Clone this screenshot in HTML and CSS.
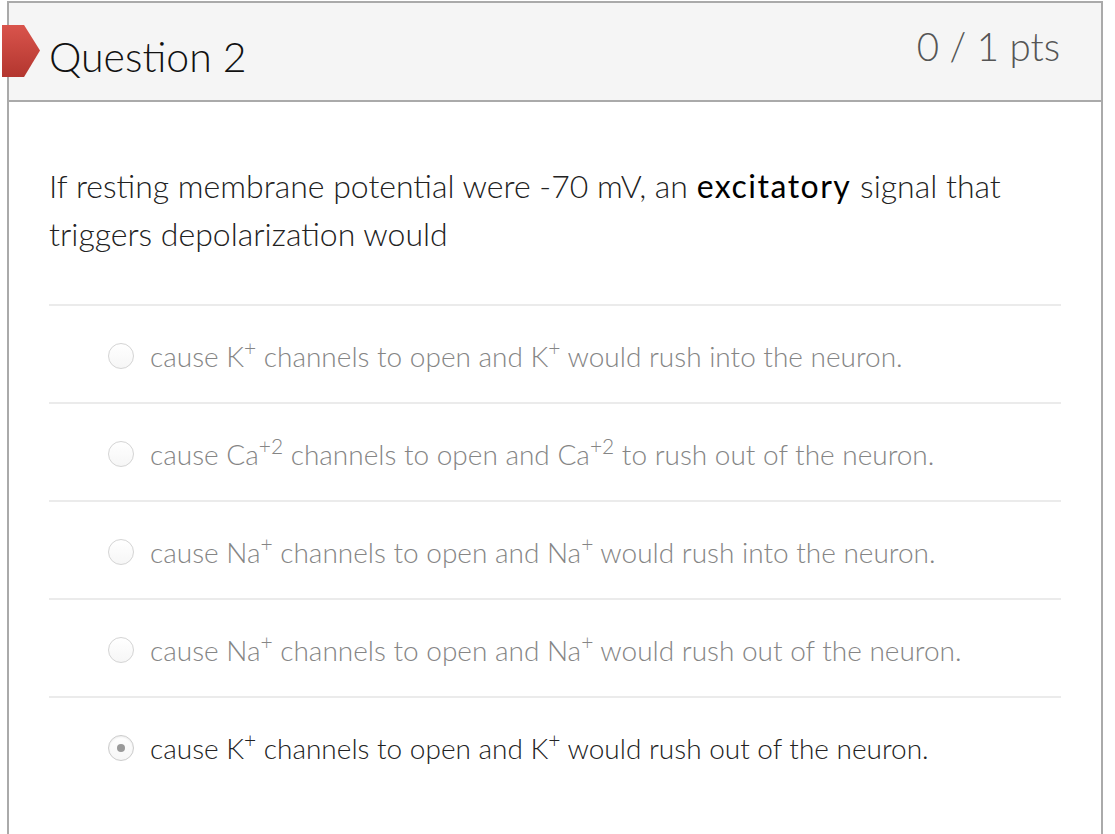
FILE: index.html
```html
<!DOCTYPE html>
<html>
<head>
<meta charset="utf-8">
<link rel="stylesheet" href="styles.css">
</head>
<body>
<div class="card">
  <div class="flag"></div>
  <div class="header">
    <h2 class="title">Question 2</h2>
    <div class="pts">0 / 1 pts</div>
  </div>
  <div class="body">
    <p class="question">If resting membrane potential were -70 mV, an <strong>excitatory</strong> signal that triggers depolarization would</p>
    <div class="answers">
      <div class="answer"><span class="radio"></span><span class="label">cause K<sup>+</sup> channels to open and K<sup>+</sup> would rush into the neuron.</span></div>
      <div class="answer"><span class="radio"></span><span class="label">cause Ca<sup>+2</sup> channels to open and Ca<sup>+2</sup> to rush out of the neuron.</span></div>
      <div class="answer"><span class="radio"></span><span class="label">cause Na<sup>+</sup> channels to open and Na<sup>+</sup> would rush into the neuron.</span></div>
      <div class="answer"><span class="radio"></span><span class="label">cause Na<sup>+</sup> channels to open and Na<sup>+</sup> would rush out of the neuron.</span></div>
      <div class="answer selected"><span class="radio"></span><span class="label">cause K<sup>+</sup> channels to open and K<sup>+</sup> would rush out of the neuron.</span></div>
    </div>
  </div>
</div>
</body>
</html>
```
FILE: styles.css
```css
html, body {
  margin: 0;
  padding: 0;
  background: #ffffff;
  font-family: Lato, "Open Sans", sans-serif;
  font-weight: 300;
  overflow: hidden;
}
.card {
  position: relative;
  margin: 1px 0 0 7px;
  width: 1096px;
  height: 860px;
  box-sizing: border-box;
  border: 2px solid #aaaaaa;
  border-bottom: none;
  background: #ffffff;
}
.flag {
  position: absolute;
  left: -7px;
  top: 22px;
  width: 38px;
  height: 52px;
  background: linear-gradient(#d9544c, #b3362f);
  clip-path: polygon(0 0, 58% 0, 100% 49%, 58% 100%, 0 100%);
}
.header {
  display: flex;
  justify-content: space-between;
  align-items: flex-start;
  height: 97px;
  background: #f5f5f5;
  border-bottom: 2px solid #aaaaaa;
}
.title {
  margin: 0;
  padding: 33px 0 0 40px;
  font-size: 41px;
  line-height: 41px;
  font-weight: 300;
  color: #111111;
}
.pts {
  padding: 24px 41px 0 0;
  font-size: 38.5px;
  line-height: 38.5px;
  font-weight: 300;
  color: #555555;
}
.body {
  padding: 60px 40px 0 40px;
}
.question {
  margin: 0 0 46px 0;
  font-size: 32px;
  line-height: 48px;
  color: #222222;
}
.question strong {
  font-weight: 400;
  letter-spacing: 1.5px;
  color: #000000;
}
.answer {
  display: flex;
  align-items: center;
  height: 98px;
  box-sizing: border-box;
  padding: 4px 0 0 59px;
  border-top: 2px solid #ebebeb;
}
.radio {
  width: 26px;
  height: 26px;
  flex: none;
  box-sizing: border-box;
  border: 1px solid #d4d4d4;
  border-radius: 50%;
  background: linear-gradient(#ffffff, #f6f6f6);
  margin-right: 16px;
  display: flex;
  align-items: center;
  justify-content: center;
}
.label {
  font-size: 28px;
  color: #858585;
  line-height: 30px;
}
.label sup {
  font-size: 21px;
  line-height: 0;
  vertical-align: 11px;
}
.selected .label {
  color: #222222;
}
.selected .radio {
  border-color: #cccccc;
  box-shadow: inset 0 1px 2px rgba(0,0,0,0.08);
}
.selected .radio::after {
  content: "";
  width: 8px;
  height: 8px;
  border-radius: 50%;
  background: #9a9a9a;
}
```
